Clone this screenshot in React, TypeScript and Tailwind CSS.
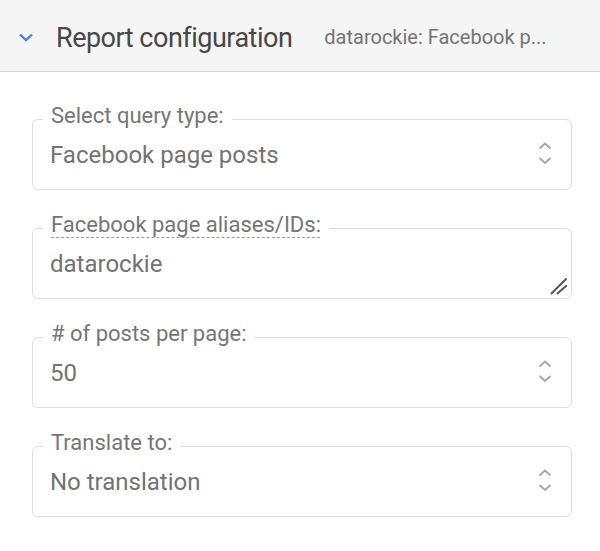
import React from "react";

const font = { fontFamily: "Roboto, 'Liberation Sans', sans-serif" };

function Arrows() {
  return (
    <svg width="16" height="23" viewBox="0 0 16 23" className="shrink-0 mt-[1px]">
      <path d="M2.5 6.5 L8 1.5 L13.5 6.5" fill="none" stroke="#a6a6a6" strokeWidth="1.9" />
      <path d="M2.5 16 L8 21 L13.5 16" fill="none" stroke="#a6a6a6" strokeWidth="1.9" />
    </svg>
  );
}

function Field({
  label,
  value,
  kind,
  dashed,
}: {
  label: string;
  value: string;
  kind: "select" | "textarea";
  dashed?: boolean;
}) {
  return (
    <fieldset className="relative border border-[#dddddd] rounded-[6px] ml-[32px] mr-[28px] pl-[10px] pr-[18px] pb-[20px]">
      <legend className="px-[8px] pb-[7px] text-[22px] leading-[26px] text-[#767676]">
        <span
          className={
            dashed
              ? "underline decoration-dashed decoration-[#9a9a9a] underline-offset-[5px] decoration-1"
              : ""
          }
        >
          {label}
        </span>
      </legend>
      <div className="flex items-start justify-between pt-[5px] pl-[7px]">
        <span className="text-[24px] leading-[28px] text-[#737373]">{value}</span>
        {kind === "select" ? <Arrows /> : null}
      </div>
      {kind === "textarea" ? (
        <svg
          width="18"
          height="18"
          viewBox="0 0 18 18"
          className="absolute right-[3px] bottom-[3px]"
        >
          <path d="M1.5 16.5 L16 2" stroke="#555555" strokeWidth="2" strokeLinecap="round" />
          <path d="M7.5 16.5 L16 9" stroke="#555555" strokeWidth="2" strokeLinecap="round" />
        </svg>
      ) : null}
    </fieldset>
  );
}

export default function App() {
  return (
    <div className="w-[600px] h-[551px] bg-white overflow-hidden" style={font}>
      <div className="h-[72px] bg-[#f5f5f5] border-b border-[#d9d9d9] flex items-start">
        <svg width="16" height="9" viewBox="0 0 16 9" className="ml-[18px] mt-[33px] shrink-0">
          <path d="M2 1.5 L8 7.2 L14 1.5" fill="none" stroke="#4a82dc" strokeWidth="2.4" />
        </svg>
        <span className="ml-[22px] mt-[22px] text-[27px] leading-[32px] tracking-[-0.5px] text-[#474747] whitespace-nowrap">
          Report configuration
        </span>
        <span className="ml-[32px] mt-[25px] text-[20px] leading-[24px] text-[#747474] whitespace-nowrap">
          datarockie: Facebook p...
        </span>
      </div>
      <div className="pt-[31px] flex flex-col gap-[22px]">
        <Field label="Select query type:" value="Facebook page posts" kind="select" />
        <Field label="Facebook page aliases/IDs:" value="datarockie" kind="textarea" dashed />
        <Field label="# of posts per page:" value="50" kind="select" />
        <Field label="Translate to:" value="No translation" kind="select" />
      </div>
    </div>
  );
}
